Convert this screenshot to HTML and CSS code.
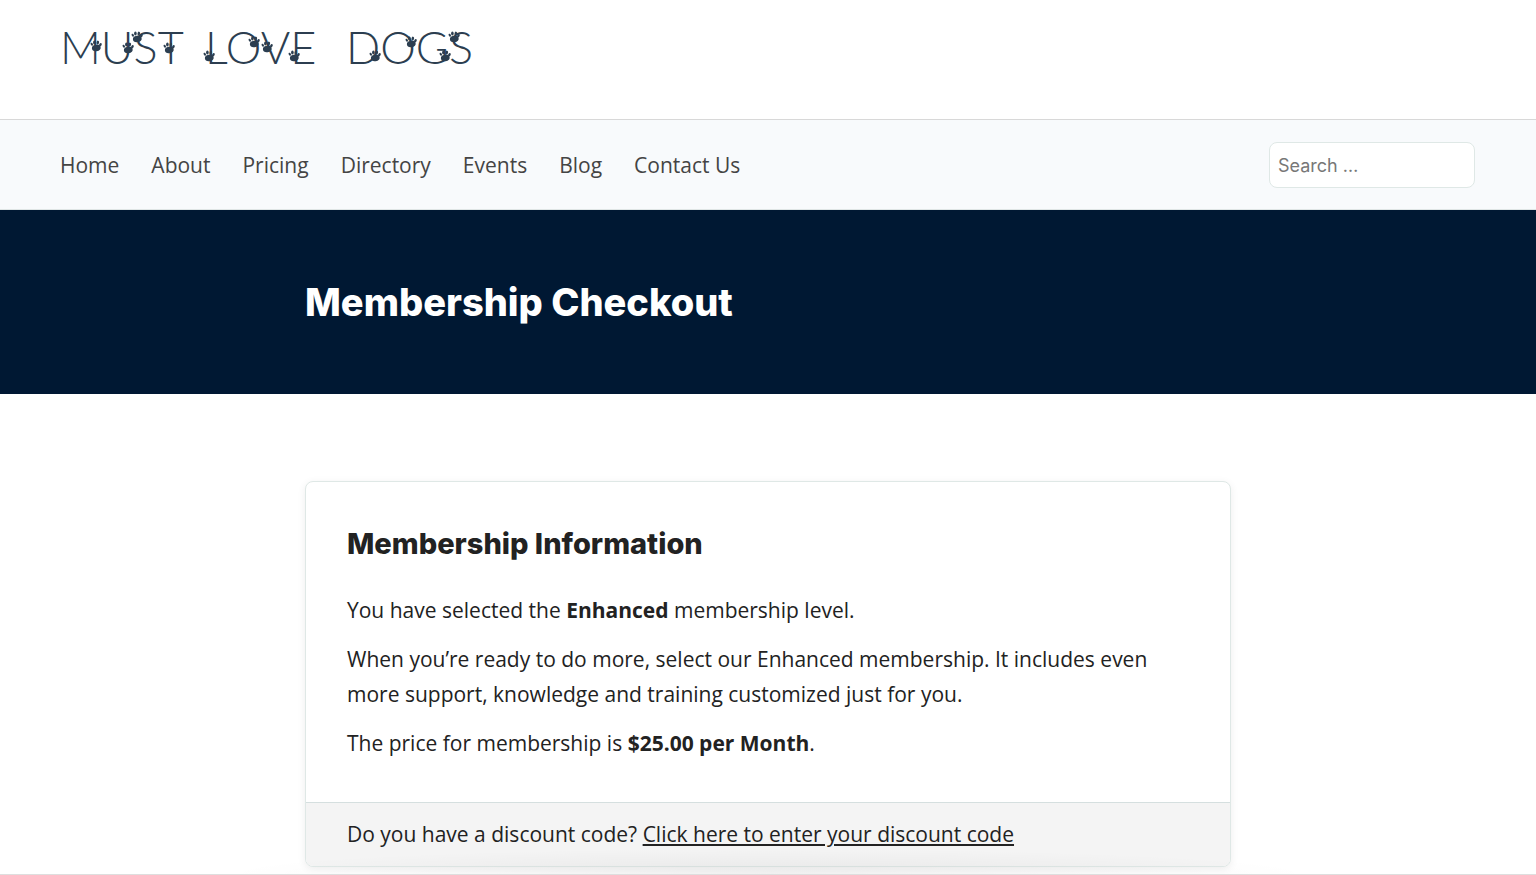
FILE: index.html
```html
<!DOCTYPE html>
<html lang="en">
<head>
<meta charset="utf-8">
<meta name="viewport" content="width=device-width, initial-scale=1">
<title>Membership Checkout – Must Love Dogs</title>
<link rel="stylesheet" href="styles.css">
</head>
<body>
<header class="site-header">
  <a class="logo" href="#">
    <svg class="logo-art" width="424" height="76" viewBox="0 0 424 76" role="img" aria-label="Must Love Dogs">
      <defs>
        <g id="paw">
          <ellipse cx="0" cy="2" rx="4.4" ry="3.3" transform="rotate(-8)"/>
          <ellipse cx="-4.2" cy="-1.8" rx="1.1" ry="1.6" transform="rotate(-30 -4.2 -1.8)"/>
          <ellipse cx="-1.6" cy="-3.5" rx="1.3" ry="1.9"/>
          <ellipse cx="1.8" cy="-3.5" rx="1.3" ry="1.9" transform="rotate(12 1.8 -3.5)"/>
          <ellipse cx="4.4" cy="-1.3" rx="1.2" ry="1.7" transform="rotate(35 4.4 -1.3)"/>
        </g>
      </defs>
      <text class="logo-text" x="0" y="56">MUST</text>
      <text class="logo-text" x="145" y="56">LOVE</text>
      <text class="logo-text" x="286" y="56">DOGS</text>
      <g class="logo-paws">
        <use href="#paw" x="36" y="38"/>
        <use href="#paw" x="68" y="40"/>
        <use href="#paw" x="77" y="29"/>
        <use href="#paw" x="109" y="40"/>
        <use href="#paw" x="149" y="48"/>
        <use href="#paw" x="194" y="34"/>
        <use href="#paw" x="207" y="39"/>
        <use href="#paw" x="234" y="48"/>
        <use href="#paw" x="315" y="48"/>
        <use href="#paw" x="351" y="34"/>
        <use href="#paw" x="385" y="48"/>
        <use href="#paw" x="394" y="29"/>
      </g>
    </svg>
  </a>
</header>
<div class="nav-bar">
  <nav class="nav" aria-label="Primary">
    <a href="#">Home</a>
    <a href="#">About</a>
    <a href="#">Pricing</a>
    <a href="#">Directory</a>
    <a href="#">Events</a>
    <a href="#">Blog</a>
    <a href="#">Contact Us</a>
  </nav>
  <form class="search" role="search">
    <input class="search-input" type="search" placeholder="Search …" aria-label="Search">
  </form>
</div>
<div class="hero">
  <h1 class="hero-title">Membership Checkout</h1>
</div>
<main class="content">
  <section class="card">
    <div class="card-body">
      <h2 class="card-title">Membership Information</h2>
      <p>You have selected the <strong>Enhanced</strong> membership level.</p>
      <p>When you’re ready to do more, select our Enhanced membership. It includes even more support, knowledge and training customized just for you.</p>
      <p>The price for membership is <strong>$25.00 per Month</strong>.</p>
    </div>
    <div class="card-footer">Do you have a discount code? <a href="#">Click here to enter your discount code</a></div>
  </section>
</main>
<footer class="page-end"></footer>
</body>
</html>
```
FILE: styles.css
```css
* { box-sizing: border-box; }
body {
  margin: 0;
  background: #fff;
  color: #222;
  font-family: "Open Sans", "Noto Sans", sans-serif;
  font-size: 21px;
  line-height: 35px;
}
.site-header {
  padding: 8px 60px 35px;
  border-bottom: 1px solid #d8d8d8;
}
.logo { display: block; }
.logo-art { display: block; }
.logo-text {
  font-family: Lato, "Open Sans", sans-serif;
  font-weight: 300;
  font-size: 45px;
  fill: #2c3e50;
}
.logo-paws { fill: #2c3e50; }
.nav-bar {
  display: flex;
  align-items: center;
  justify-content: space-between;
  padding: 22px 61px 21px 60px;
  background: #f8fafc;
  border-bottom: 1px solid #dfe5e5;
}
.nav { display: flex; gap: 32px; }
.nav a { color: #444; text-decoration: none; }
.search-input {
  display: block;
  width: 206px;
  height: 46px;
  padding: 0 8px;
  border: 1px solid #dfe8e6;
  border-radius: 8px;
  background: #fff;
  color: #444;
  font-family: Inter, "Open Sans", sans-serif;
  font-size: 18px;
}
.search-input::placeholder { color: #777; opacity: 1; }
.hero {
  padding: 64px 24px;
  background: #001833;
}
.hero-title {
  max-width: 926px;
  margin: 0 auto;
  color: #fff;
  font-family: Inter, "Open Sans", sans-serif;
  font-size: 38px;
  font-weight: 800;
  line-height: 56px;
}
.content { padding: 87px 24px 7px; }
.card {
  max-width: 926px;
  margin: 0 auto;
  border: 1px solid #dfe8e6;
  border-radius: 8px;
  background: #fff;
  box-shadow: 0 2px 8px rgba(0, 0, 0, .07);
  overflow: hidden;
}
.card-body { padding: 41px; }
.card-title {
  margin: 0 0 28px;
  font-family: Inter, "Open Sans", sans-serif;
  font-size: 29px;
  font-weight: 800;
  line-height: 42px;
}
.card-body p { margin: 0 0 14px; }
.card-body p:last-child { margin-bottom: 0; }
.card-footer {
  padding: 14px 41px;
  border-top: 1px solid #d5dfdf;
  background: #f4f4f4;
}
.card-footer a {
  color: #222;
  text-decoration: underline;
  text-underline-offset: 2px;
}
.page-end {
  position: relative;
  border-top: 1px solid #dedede;
}
.page-end::before {
  content: "";
  position: absolute;
  left: 14%;
  right: 14%;
  bottom: 1px;
  height: 26px;
  background: radial-gradient(ellipse at bottom, rgba(0, 0, 0, .05), transparent 70%);
  pointer-events: none;
}
```
